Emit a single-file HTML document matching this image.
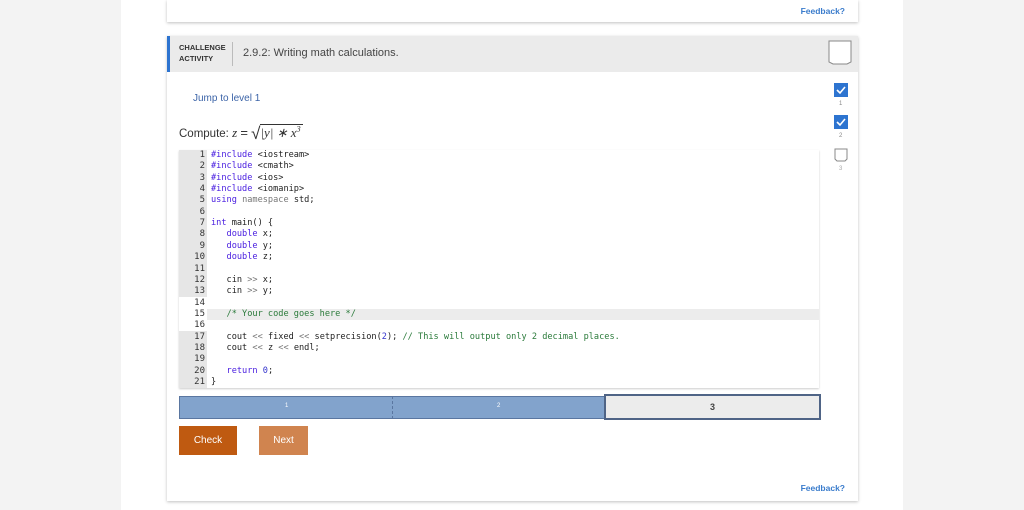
<!DOCTYPE html>
<html><head><meta charset="utf-8"><style>
*{margin:0;padding:0;box-sizing:border-box}
body{width:1024px;height:510px;background:#f3f3f3;position:relative;overflow:hidden;font-family:"Liberation Sans",sans-serif}
.col{position:absolute;left:121px;top:0;width:782px;height:510px;background:#fff}
.card{position:absolute;left:167px;width:691px;background:#fff;box-shadow:0 1px 3px rgba(0,0,0,.25)}
.fb{position:absolute;right:13px;font-size:8.5px;font-weight:bold;color:#3a7ccc}
.hdr{position:absolute;left:0;top:0;width:691px;height:36px;background:#ebebeb;border-left:3px solid #2d74d0}
.code{position:absolute;left:12px;top:114px;width:640px;height:238px;background:#fff;box-shadow:0 1px 2px rgba(0,0,0,.2);font-family:"DejaVu Sans Mono","Liberation Mono",monospace;font-size:8.6px}
.gut{position:absolute;left:0;width:28px;background:#e6e6e6}
.ln{position:absolute;left:0;width:26px;text-align:right;color:#333;height:11.35px;line-height:11.35px;font-size:9px}
.tx{position:absolute;left:32px;white-space:pre;color:#222;height:11.35px;line-height:11.35px}
.k{color:#4a1fe0}.c{color:#2a7a3a}.g{color:#777}.n{color:#3333cc}
</style></head><body>
<div class="col"></div>
<div class="card" style="top:0;height:22px"><div class="fb" style="top:6px">Feedback?</div></div>
<div class="card" style="top:36px;height:465px">
 <div class="hdr">
  <div style="position:absolute;left:9px;top:6px;font-size:7.5px;font-weight:bold;color:#333;line-height:11px">CHALLENGE<br>ACTIVITY</div>
  <div style="position:absolute;left:62px;top:6px;width:1px;height:24px;background:#bbb"></div>
  <div style="position:absolute;left:73px;top:11px;font-size:11px;color:#444">2.9.2: Writing math calculations.</div>
 </div>
 <svg style="position:absolute;left:661px;top:4px" width="24" height="28"><path d="M1 1H23V22L19 24H5L1 22Z" fill="#fff" stroke="#888"/></svg>
 <svg style="position:absolute;left:667px;top:47px" width="14" height="14"><rect width="14" height="14" fill="#2d74d0"/><path d="M3 7L6 10L11 4" stroke="#fff" stroke-width="1.6" fill="none"/></svg>
 <div style="position:absolute;left:672px;top:65px;font-size:6px;color:#888">1</div>
 <svg style="position:absolute;left:667px;top:79px" width="14" height="14"><rect width="14" height="14" fill="#2d74d0"/><path d="M3 7L6 10L11 4" stroke="#fff" stroke-width="1.6" fill="none"/></svg>
 <div style="position:absolute;left:672px;top:97px;font-size:6px;color:#888">2</div>
 <svg style="position:absolute;left:667px;top:112px" width="14" height="14"><path d="M1 1H13V11L11 13H3L1 11Z" fill="#fff" stroke="#888"/></svg>
 <div style="position:absolute;left:672px;top:130px;font-size:6px;color:#aaa">3</div>
 <div style="position:absolute;left:26px;top:57px;font-size:10px;color:#3c64a8">Jump to level 1</div>
 <div style="position:absolute;left:12px;top:88px;font-size:11.5px;color:#333;white-space:nowrap">Compute: <i style="font-family:'Liberation Serif',serif;font-size:13px">z</i> <span style="font-size:13px">=</span> <span style="font-size:17px;vertical-align:-2px">√</span><span style="border-top:1px solid #333;font-family:'Liberation Serif',serif;font-style:italic;font-size:13px;padding-right:2px">|y| ∗ x<sup style="font-size:8px">3</sup></span></div>
 <div class="code">
  <div class="gut" style="top:0;height:147px"></div>
  <div class="gut" style="top:181px;height:57px"></div>
  <div style="position:absolute;left:28px;top:159px;width:612px;height:11.35px;background:#ececec"></div>
  <div class="ln" style="top:0">1</div><div class="tx" style="top:0"><span class="k">#include</span> &lt;iostream&gt;</div>
  <div class="ln" style="top:11.35px">2</div><div class="tx" style="top:11.35px"><span class="k">#include</span> &lt;cmath&gt;</div>
  <div class="ln" style="top:22.7px">3</div><div class="tx" style="top:22.7px"><span class="k">#include</span> &lt;ios&gt;</div>
  <div class="ln" style="top:34.05px">4</div><div class="tx" style="top:34.05px"><span class="k">#include</span> &lt;iomanip&gt;</div>
  <div class="ln" style="top:45.4px">5</div><div class="tx" style="top:45.4px"><span class="k">using</span> <span class="g">namespace</span> std;</div>
  <div class="ln" style="top:56.75px">6</div>
  <div class="ln" style="top:68.1px">7</div><div class="tx" style="top:68.1px"><span class="k">int</span> main() {</div>
  <div class="ln" style="top:79.45px">8</div><div class="tx" style="top:79.45px">   <span class="k">double</span> x;</div>
  <div class="ln" style="top:90.8px">9</div><div class="tx" style="top:90.8px">   <span class="k">double</span> y;</div>
  <div class="ln" style="top:102.15px">10</div><div class="tx" style="top:102.15px">   <span class="k">double</span> z;</div>
  <div class="ln" style="top:113.5px">11</div>
  <div class="ln" style="top:124.85px">12</div><div class="tx" style="top:124.85px">   cin <span class="g">&gt;&gt;</span> x;</div>
  <div class="ln" style="top:136.2px">13</div><div class="tx" style="top:136.2px">   cin <span class="g">&gt;&gt;</span> y;</div>
  <div class="ln" style="top:147.55px">14</div>
  <div class="ln" style="top:158.9px">15</div><div class="tx" style="top:158.9px">   <span class="c">/* Your code goes here */</span></div>
  <div class="ln" style="top:170.25px">16</div>
  <div class="ln" style="top:181.6px">17</div><div class="tx" style="top:181.6px">   cout <span class="g">&lt;&lt;</span> fixed <span class="g">&lt;&lt;</span> setprecision(<span class="n">2</span>); <span class="c">// This will output only 2 decimal places.</span></div>
  <div class="ln" style="top:192.95px">18</div><div class="tx" style="top:192.95px">   cout <span class="g">&lt;&lt;</span> z <span class="g">&lt;&lt;</span> endl;</div>
  <div class="ln" style="top:204.3px">19</div>
  <div class="ln" style="top:215.65px">20</div><div class="tx" style="top:215.65px">   <span class="k">return</span> <span class="n">0</span>;</div>
  <div class="ln" style="top:227px">21</div><div class="tx" style="top:227px">}</div>
 </div>
 <div style="position:absolute;left:12px;top:360px;width:426px;height:23px;background:#82a3cc;border:1px solid #5a76a0"></div>
 <div style="position:absolute;left:225px;top:360px;width:0;height:23px;border-left:1px dashed #5a76a0"></div>
 <div style="position:absolute;left:118px;top:367px;font-size:6px;color:#fff">1</div>
 <div style="position:absolute;left:330px;top:367px;font-size:6px;color:#fff">2</div>
 <div style="position:absolute;left:437px;top:358px;width:217px;height:26px;background:#ececec;border:2px solid #4f6486;text-align:center;font-size:9px;font-weight:bold;color:#444;line-height:22px">3</div>
 <div style="position:absolute;left:12px;top:390px;width:58px;height:29px;background:#bf5a11;color:#fff;font-size:10px;text-align:center;line-height:29px">Check</div>
 <div style="position:absolute;left:92px;top:390px;width:49px;height:29px;background:#d0844f;color:#fff;font-size:10px;text-align:center;line-height:29px">Next</div>
 <div class="fb" style="top:447px">Feedback?</div>
</div>
</body></html>
